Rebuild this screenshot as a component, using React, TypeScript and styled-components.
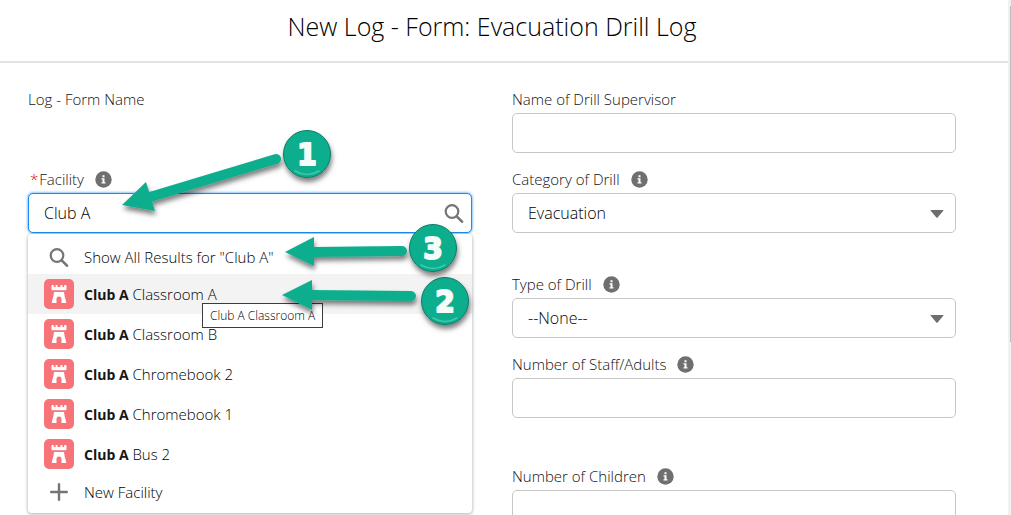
import React from "react";
import styled, { createGlobalStyle } from "styled-components";

const Global = createGlobalStyle`
  *, *::before, *::after { box-sizing: border-box; }
  body { margin: 0; background: #fff; overflow: hidden; }
  body, input, select, button { font-family: "Open Sans", "Noto Sans", sans-serif; font-weight: 300; }
`;

const Shell = styled.div`
  position: relative;
  display: flex;
  height: 100vh;
  overflow: hidden;
`;

const Modal = styled.main`
  flex: 1;
  min-width: 0;
`;

const ScrollTrack = styled.div`
  width: 3px;
  padding-top: 6px;
  background: #f1f1f1;
`;

const ScrollThumb = styled.div`
  width: 1px;
  height: 66%;
  margin-left: auto;
  background: #bdbdbd;
`;

const Header = styled.header`
  padding: 10px 52px 18px 28px;
  border-bottom: 2px solid #e3e3e3;
`;

const Title = styled.h1`
  margin: 0;
  font-size: 25px;
  line-height: 33px;
  font-weight: 300;
  text-align: center;
  color: #000;
`;

const Form = styled.form`
  display: grid;
  grid-template-columns: 1fr 1fr;
  column-gap: 40px;
  padding: 27px 52px 0 28px;
`;

const Column = styled.div`
  min-width: 0;
`;

const Field = styled.div<{ $after?: number }>`
  position: relative;
  margin-bottom: ${(p) => p.$after ?? 17}px;
`;

const LabelRow = styled.div`
  display: flex;
  align-items: center;
  height: 18px;
  margin-bottom: 5px;
  font-size: 15px;
  line-height: 18px;
  color: #111;
`;

const Required = styled.span`
  margin: 0 1px 0 2px;
  color: #d8001c;
`;

const InfoButton = styled.button`
  display: flex;
  margin: 0 0 0 11px;
  padding: 0;
  border: 0;
  background: none;
`;

const Control = styled.div`
  position: relative;
`;

const TextInput = styled.input<{ $active?: boolean }>`
  display: block;
  width: 100%;
  height: 40px;
  padding: 0 40px 0 15px;
  border: 1px solid ${(p) => (p.$active ? "#1b8cf0" : "#c6c6c6")};
  border-radius: 5px;
  box-shadow: ${(p) => (p.$active ? "0 0 3px #1b8cf0" : "none")};
  outline: 0;
  background: #fff;
  font-size: 16px;
  color: #000;
`;

const Select = styled.select`
  display: block;
  width: 100%;
  height: 40px;
  padding: 0 40px 0 15px;
  border: 1px solid #c6c6c6;
  border-radius: 5px;
  appearance: none;
  background: #fff;
  font-size: 16px;
  color: #000;
`;

const ControlIcon = styled.span`
  position: absolute;
  top: 0;
  right: 8px;
  height: 100%;
  display: flex;
  align-items: center;
  pointer-events: none;
`;

const Menu = styled.ul`
  position: absolute;
  top: 100%;
  left: 0;
  right: 0;
  margin: 1px 0 0;
  padding: 5px 0 3px;
  list-style: none;
  background: #fff;
  border-radius: 4px;
  box-shadow: 0 1px 3px 1px rgba(0, 0, 0, 0.22);
`;

const Option = styled.li<{ $compact?: boolean; $active?: boolean }>`
  display: flex;
  align-items: center;
  gap: 10px;
  height: ${(p) => (p.$compact ? 36 : 40)}px;
  padding-left: 16px;
  background: ${(p) => (p.$active ? "#f3f3f3" : "transparent")};
  font-size: 15px;
  line-height: 20px;
  color: #000;
`;

const OptionList = styled.ul`
  margin: -1px 0 0;
  padding: 0;
  list-style: none;
`;

const IconCell = styled.span<{ $tile?: boolean }>`
  display: flex;
  align-items: center;
  justify-content: center;
  width: 30px;
  height: 30px;
  border-radius: 5px;
  background: ${(p) => (p.$tile ? "#f87377" : "transparent")};
`;

const Match = styled.strong`
  font-size: 14px;
  font-weight: 700;
  color: #161616;
`;

const Tooltip = styled.div`
  position: absolute;
  top: 303px;
  left: 202px;
  padding: 3px 7px;
  border: 1px solid #3c3c3c;
  background: #fff;
  font-size: 12px;
  line-height: 17px;
  white-space: nowrap;
  color: #000;
`;

const Annotations = styled.svg`
  position: absolute;
  top: 0;
  left: 0;
  overflow: visible;
  pointer-events: none;
`;

const BadgeDigit = styled.text`
  font-family: "DejaVu Sans Condensed", "DejaVu Sans", sans-serif;
  font-size: 31px;
  font-weight: 700;
  text-anchor: middle;
  fill: #f4fbf8;
  stroke: #f4fbf8;
  stroke-width: 2px;
  stroke-linejoin: round;
`;

const InfoIcon = () => (
  <svg width="17" height="17" viewBox="0 0 17 17" aria-hidden="true">
    <circle cx="8.500" cy="8.500" r="8.200" fill="#6f6f6f" />
    <path d="M7.500 4.300h2v2h-2zM6.500 7.300h3v4h1v1.200h-4v-1.200h1V8.500h-1z" fill="#fff" />
  </svg>
);

const SearchIcon = () => (
  <svg width="20" height="20" viewBox="0 0 20 20" fill="none" stroke="#757575" aria-hidden="true">
    <circle cx="8" cy="8.500" r="6.300" strokeWidth="2.200" />
    <path d="M12.700 13.400L18 18.700" strokeWidth="2.600" strokeLinecap="round" />
  </svg>
);

const PlusIcon = () => (
  <svg width="18" height="18" viewBox="0 0 18 18" aria-hidden="true">
    <path d="M9 1.200v15.600M1.200 9h15.600" stroke="#757575" strokeWidth="2.400" strokeLinecap="round" />
  </svg>
);

const CastleIcon = () => (
  <svg width="16" height="20" viewBox="0 0 16 20" fill="#fff" aria-hidden="true">
    <path d="M.5 1.600q0-.6.6-.6h1.200q.6 0 .6.600V3h1.600V1.600q0-.6.6-.6h.8q.6 0 .6.600V3h3V1.600q0-.6.6-.6h.8q.6 0 .6.600V3h1.600V1.600q0-.6.6-.6h1.200q.6 0 .6.600V5q0 1.300-1.300 1.300H1.800Q.5 6.300.5 5z" />
    <path d="M3 8h10l.6 4 1.600 6q.1.900-.8.900H10.500v-3.900a2.500 2.500 0 0 0-5 0v3.900H1.600q-.9 0-.8-.9l1.600-6z" />
  </svg>
);

const Chevron = () => (
  <svg width="21" height="16" viewBox="0 0 21 16" aria-hidden="true">
    <path d="M4 5h12q.8 0 .3.700L10.600 12.600q-.6.600-1.200 0L3.700 5.700Q3.200 5 4 5z" fill="#706e6b" />
  </svg>
);

interface LabelProps {
  id: string;
  text: string;
  info?: boolean;
  required?: boolean;
}

const FieldLabel = ({ id, text, info, required }: LabelProps) => (
  <LabelRow>
    {required && <Required>*</Required>}
    <label htmlFor={id}>{text}</label>
    {info && (
      <InfoButton type="button" aria-label={`Help: ${text}`}>
        <InfoIcon />
      </InfoButton>
    )}
  </LabelRow>
);

const results = ["Classroom A", "Classroom B", "Chromebook 2", "Chromebook 1", "Bus 2"];

const arrows = [
  { head: "122,205 146,182 155,211", shaft: "M150 197L276 159" },
  { head: "285,252 314,237 314,266", shaft: "M312 252L402 251" },
  { head: "282,295 312,280 312,310", shaft: "M310 295L411 296" },
];

const badges = [
  { n: "1", x: 307, y: 154 },
  { n: "2", x: 445, y: 301 },
  { n: "3", x: 433, y: 248 },
];

export default function App() {
  return (
    <>
      <Global />
      <Shell>
        <Modal>
          <Header>
            <Title>New Log - Form: Evacuation Drill Log</Title>
          </Header>
          <Form>
            <Column>
              <Field $after={62}>
                <LabelRow>Log - Form Name</LabelRow>
              </Field>
              <Field $after={0}>
                <FieldLabel id="facility" text="Facility" info required />
                <Control>
                  <TextInput id="facility" $active defaultValue="Club A" />
                  <ControlIcon>
                    <SearchIcon />
                  </ControlIcon>
                </Control>
                <Menu>
                  <Option $compact>
                    <IconCell>
                      <SearchIcon />
                    </IconCell>
                    Show All Results for "Club A"
                  </Option>
                  <li>
                    <OptionList>
                      {results.map((name, i) => (
                        <Option key={name} $active={i === 0}>
                          <IconCell $tile>
                            <CastleIcon />
                          </IconCell>
                          <span>
                            <Match>Club A</Match> {name}
                          </span>
                        </Option>
                      ))}
                    </OptionList>
                  </li>
                  <Option $compact>
                    <IconCell>
                      <PlusIcon />
                    </IconCell>
                    New Facility
                  </Option>
                </Menu>
              </Field>
            </Column>
            <Column>
              <Field>
                <FieldLabel id="supervisor" text="Name of Drill Supervisor" />
                <TextInput id="supervisor" />
              </Field>
              <Field $after={42}>
                <FieldLabel id="category" text="Category of Drill" info />
                <Control>
                  <Select id="category" defaultValue="Evacuation">
                    <option>Evacuation</option>
                  </Select>
                  <ControlIcon>
                    <Chevron />
                  </ControlIcon>
                </Control>
              </Field>
              <Field>
                <FieldLabel id="type" text="Type of Drill" info />
                <Control>
                  <Select id="type" defaultValue="--None--">
                    <option>--None--</option>
                  </Select>
                  <ControlIcon>
                    <Chevron />
                  </ControlIcon>
                </Control>
              </Field>
              <Field $after={49}>
                <FieldLabel id="staff" text="Number of Staff/Adults" info />
                <TextInput id="staff" />
              </Field>
              <Field>
                <FieldLabel id="children" text="Number of Children" info />
                <TextInput id="children" />
              </Field>
            </Column>
          </Form>
        </Modal>
        <ScrollTrack>
          <ScrollThumb />
        </ScrollTrack>
        <Tooltip role="tooltip">Club A Classroom A</Tooltip>
        <Annotations width="480" height="340" viewBox="0 0 480 340">
          <defs>
            <filter id="drop" x="-20%" y="-40%" width="140%" height="200%">
              <feDropShadow dx="1" dy="4" stdDeviation="2.500" floodColor="#000" floodOpacity="0.5" />
            </filter>
          </defs>
          {arrows.map((a) => (
            <g key={a.head} filter="url(#drop)">
              <polygon points={a.head} fill="#0aae8e" />
              <path d={a.shaft} stroke="#0aae8e" strokeWidth="10" strokeLinecap="round" />
            </g>
          ))}
          {badges.map((b) => (
            <g key={b.n}>
              <circle cx={b.x} cy={b.y} r="23.500" fill="#0aae8e" stroke="#0b7a66" filter="url(#drop)" />
              <path
                d={`M${b.x - 12} ${b.y + 17}q12 7 24 0`}
                fill="none"
                stroke="#3fc9ae"
                strokeWidth="1.500"
                strokeLinecap="round"
              />
              <BadgeDigit x={b.x} y={b.y + 11}>
                {b.n}
              </BadgeDigit>
            </g>
          ))}
        </Annotations>
      </Shell>
    </>
  );
}
